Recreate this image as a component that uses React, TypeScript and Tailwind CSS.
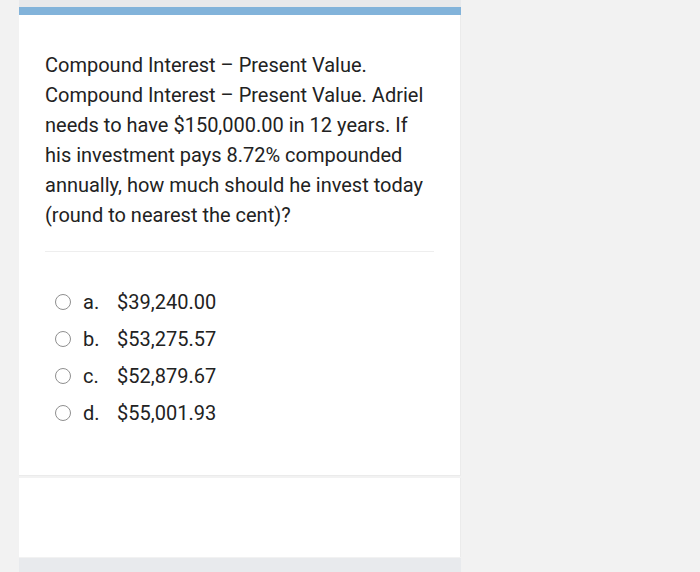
import React from "react";

const options = [
  { l: "a.", v: "$39,240.00" },
  { l: "b.", v: "$53,275.57" },
  { l: "c.", v: "$52,879.67" },
  { l: "d.", v: "$55,001.93" },
];

export default function App() {
  return (
    <div className="w-[700px] h-[572px] bg-[#f2f2f2] overflow-hidden" style={{ fontFamily: "Roboto, 'Liberation Sans', sans-serif" }}>
      <div className="ml-[19px] w-[442px] flex flex-col">
        <div className="h-[7px] bg-[#e8e9eb]" />
        <div className="h-[8px] bg-[#82b3da]" />
        <div className="bg-white h-[461px] border-r border-b border-[#ebebeb] flex flex-col">
          <div className="pl-[26px] w-[412px] pt-[35px] text-[20px] leading-[30px] text-[#222]">
            <p>Compound Interest – Present Value.</p>
            <p>
              Compound Interest – Present Value. Adriel needs to have $150,000.00 in 12 years. If his investment pays 8.72% compounded annually, how much should he invest today (round to nearest the cent)?
            </p>
          </div>
          <div className="mx-[26px] mt-[21px] border-t border-[#eeeeee]" />
          <div className="pl-[36px] pt-[35px] flex flex-col gap-[7px]">
            {options.map((o) => (
              <div key={o.l} className="flex items-center h-[30px] text-[20px] text-[#222]">
                <span className="w-[16px] h-[16px] rounded-full border border-[#8f8f8f] bg-white" />
                <span className="ml-[12px] w-[34px]">{o.l}</span>
                <span>{o.v}</span>
              </div>
            ))}
          </div>
        </div>
        <div className="mt-[2px] bg-white h-[79px] border-r border-[#ebebeb]" />
        <div className="mt-[1px] h-[20px] bg-[#e8eaed]" />
      </div>
    </div>
  );
}
